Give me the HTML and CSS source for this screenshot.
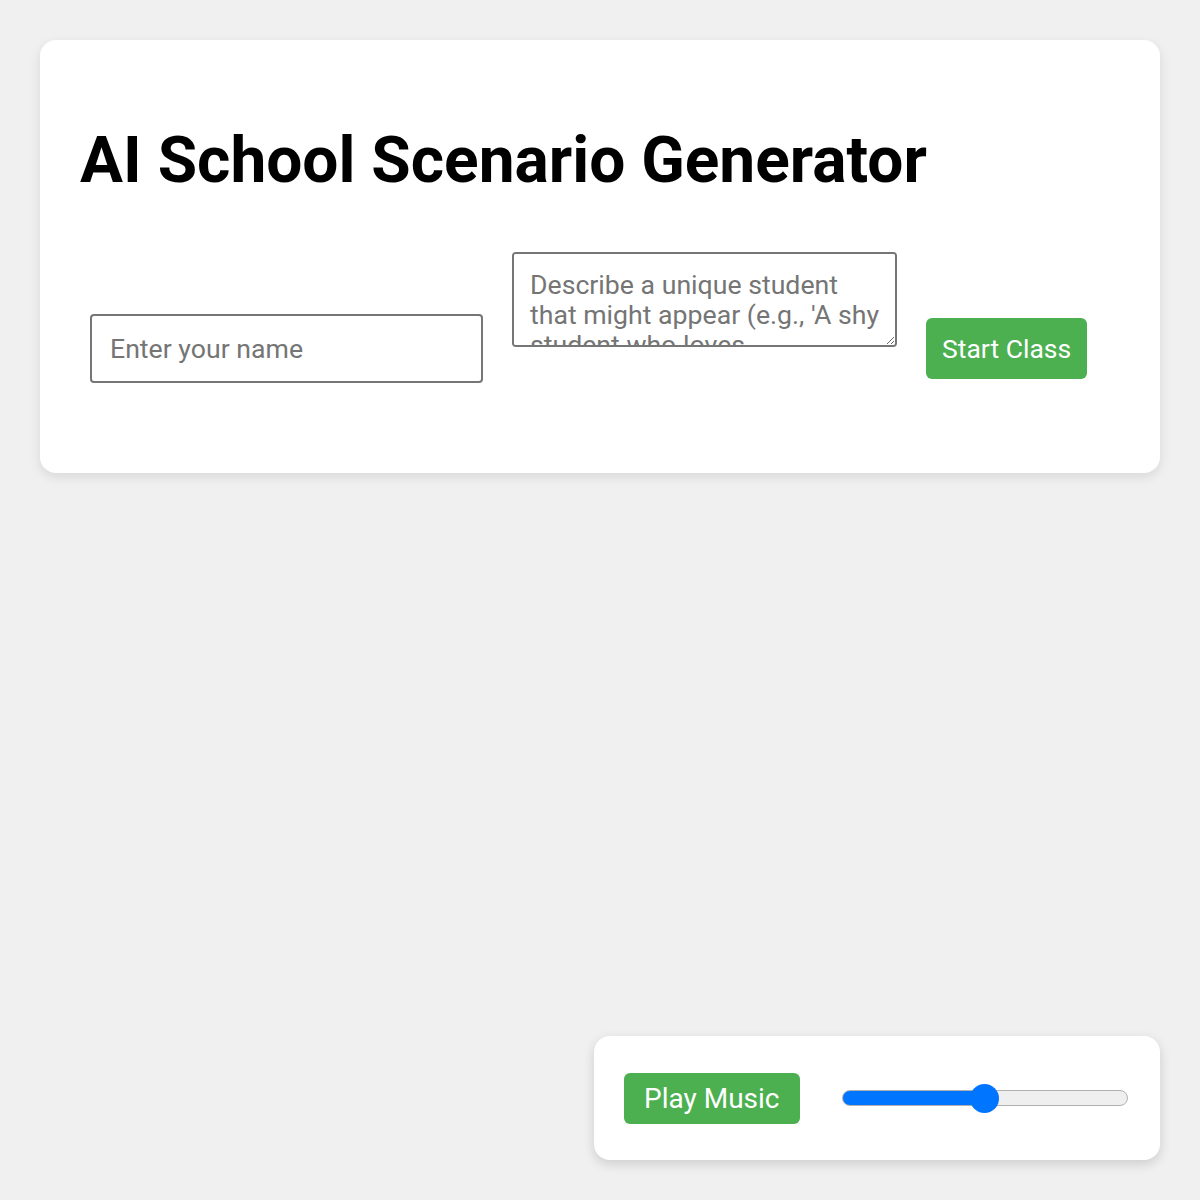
FILE: index.html
```html
<!DOCTYPE html>
<html lang="en">
<head>
  <meta charset="UTF-8" />
  <meta name="viewport" content="width=device-width, initial-scale=1.0"/>
  <title>AI School Scenario Generator</title>
  <link rel="stylesheet" href="styles.css">
</head>
<body>
  <div class="container">
    <h1>AI School Scenario Generator</h1>
    <div class="setup">
      <input type="text" id="player-name" class="name-input" placeholder="Enter your name">
      <textarea id="student-desc" class="student-input" placeholder="Describe a unique student that might appear (e.g., 'A shy student who loves astronomy')"></textarea>
      <button id="start-btn" class="btn start-btn">Start Class</button>
    </div>
  </div>

  <div class="music-controls">
    <button id="music-btn" class="btn music-btn">Play Music</button>
    <input type="range" id="volume" class="volume" min="0" max="100" value="50">
  </div>
</body>
</html>
```

FILE: styles.css
```css
body {
  font-family: Roboto, "Liberation Sans", sans-serif;
  background-color: #f0f0f0;
  margin: 0;
  padding: 40px;
}
.container {
  background: #fff;
  border-radius: 16px;
  padding: 40px;
  box-shadow: 0 4px 12px rgba(0, 0, 0, 0.1);
}
h1 {
  font-size: 64px;
  font-weight: bold;
  margin: 43px 0;
  color: #000;
}
.setup {
  display: flex;
  align-items: flex-start;
  gap: 29px;
  padding: 0 0 50px 10px;
}
.name-input,
.student-input {
  font-family: Roboto, "Liberation Sans", sans-serif;
  font-size: 26.67px;
  color: #000;
  border: 2px solid #767676;
  border-radius: 4px;
  box-sizing: border-box;
  margin: 0;
}
.name-input {
  width: 393px;
  height: 69px;
  padding: 0 18px;
  margin-top: 73px;
}
.student-input {
  width: 385px;
  height: 95px;
  padding: 16px 8px 16px 16px;
  line-height: 30px;
  margin-top: 11px;
  resize: both;
}
::placeholder {
  color: #757575;
}
.btn {
  font-family: Roboto, "Liberation Sans", sans-serif;
  background: #4caf50;
  color: #fff;
  border: none;
  border-radius: 6px;
  cursor: pointer;
}
.start-btn {
  font-size: 26.5px;
  height: 61px;
  padding: 0 16px;
  margin-top: 77px;
}
.music-controls {
  position: fixed;
  right: 40px;
  bottom: 40px;
  width: 566px;
  height: 124px;
  box-sizing: border-box;
  padding: 0 30px;
  display: flex;
  align-items: center;
  gap: 42px;
  background: #fff;
  border-radius: 16px;
  box-shadow: 0 4px 12px rgba(0, 0, 0, 0.15);
}
.music-btn {
  font-size: 28px;
  height: 51px;
  padding: 0 20px;
}
.volume {
  -webkit-appearance: none;
  appearance: none;
  width: 286px;
  height: 16px;
  margin: 0;
  border-radius: 8px;
  border: 1.5px solid #b0b0b0;
  box-sizing: border-box;
  background: linear-gradient(to right, #0075ff 0, #0075ff 51%, #efefef 51%, #efefef 100%);
}
.volume::-webkit-slider-thumb {
  -webkit-appearance: none;
  appearance: none;
  width: 29px;
  height: 29px;
  border-radius: 50%;
  background: #0075ff;
  border: none;
}
```
